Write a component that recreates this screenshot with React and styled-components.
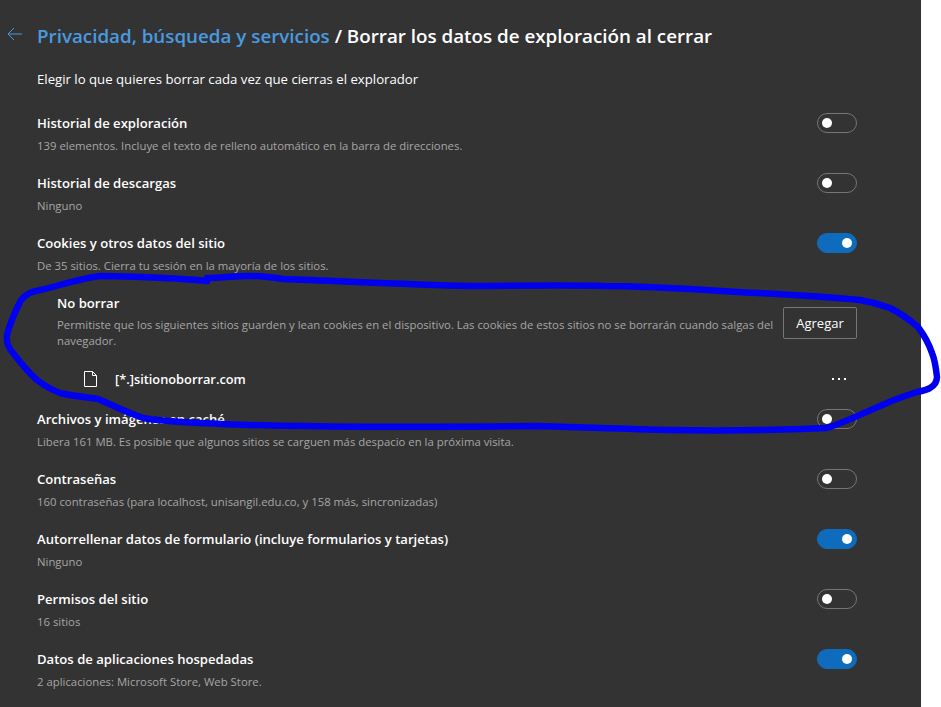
import React from 'react'
import styled, { createGlobalStyle } from 'styled-components'

const Global = createGlobalStyle`
  html, body { margin: 0; padding: 0; background: #fff; }
  body { font-family: "Open Sans", "Noto Sans", sans-serif; }
`

const Page = styled.div`
  position: relative;
  width: 941px;
  height: 707px;
  overflow: hidden;
`

const Panel = styled.main`
  width: 921px;
  height: 707px;
  box-sizing: border-box;
  padding: 0 64px 0 37px;
  background: #333333;
  color: #fff;
`

const Header = styled.header`
  display: flex;
  align-items: center;
  height: 36px;
  padding-top: 18px;
  margin-left: -30px;
`

const BackIcon = styled.svg`
  width: 15px;
  height: 14px;
  margin-right: 15px;
  margin-bottom: 4px;
  color: #4a9ae0;
`

const Heading = styled.h1`
  margin: 0;
  font-size: 18.8px;
  line-height: 36px;
  font-weight: 600;
  white-space: nowrap;
`

const Crumb = styled.span`
  color: #4a9ae0;
`

const Intro = styled.p`
  margin: 15px 0 14px;
  font-size: 13.2px;
  line-height: 20px;
  color: #fff;
`

const Row = styled.section`
  display: flex;
  justify-content: space-between;
  align-items: flex-start;
  height: 60px;
  box-sizing: border-box;
  padding-top: 10px;
`

const Title = styled.div`
  font-size: 13.1px;
  line-height: 20px;
  font-weight: 600;
  color: #fff;
`

const Desc = styled.div`
  margin-top: 4px;
  padding-top: 1px;
  font-size: 11.35px;
  line-height: 16px;
  color: #a6a6a6;
`

const Toggle = styled.span`
  display: flex;
  align-items: center;
  justify-content: ${p => (p.$on ? 'flex-end' : 'flex-start')};
  width: 40px;
  height: 20px;
  box-sizing: border-box;
  padding: 0 4px;
  border-radius: 10px;
  border: 1px solid ${p => (p.$on ? '#0f6cbd' : '#767676')};
  background: ${p => (p.$on ? '#0f6cbd' : 'transparent')};
  flex-shrink: 0;

  &::after {
    content: '';
    width: 10px;
    height: 10px;
    border-radius: 50%;
    background: #fff;
  }
`

const Nested = styled.section`
  height: 116px;
  padding: 10px 0 0 20px;
  box-sizing: border-box;
`

const NestedBody = styled.div`
  display: flex;
  justify-content: space-between;
  align-items: flex-start;
  gap: 8px;
  margin-top: 3px;
`

const NestedDesc = styled(Desc)`
  margin-top: 0;
  width: 722px;
`

const AddButton = styled.button`
  width: 74px;
  height: 32px;
  margin-top: -9px;
  flex-shrink: 0;
  border: 1px solid #767676;
  border-radius: 2px;
  background: transparent;
  color: #fff;
  font: 400 13px "Open Sans", sans-serif;
`

const SiteRow = styled.div`
  display: flex;
  align-items: center;
  height: 40px;
  margin-top: 10px;
  padding-left: 27px;
`

const FileIcon = styled.svg`
  width: 13px;
  height: 16px;
  margin-right: 18px;
`

const SiteName = styled.span`
  flex: 1;
  font-size: 12.8px;
  font-weight: 600;
`

const More = styled.span`
  display: flex;
  gap: 4px;
  margin-right: 11px;

  i {
    width: 2px;
    height: 2px;
    background: #fff;
  }
`

const Scribble = styled.svg`
  position: absolute;
  inset: 0;
  width: 941px;
  height: 707px;
  pointer-events: none;
`

const items = [
  ['Historial de exploración', '139 elementos. Incluye el texto de relleno automático en la barra de direcciones.', false],
  ['Historial de descargas', 'Ninguno', false],
  ['Cookies y otros datos del sitio', 'De 35 sitios. Cierra tu sesión en la mayoría de los sitios.', true],
]

const moreItems = [
  ['Archivos y imágenes en caché', 'Libera 161 MB. Es posible que algunos sitios se carguen más despacio en la próxima visita.', false],
  ['Contraseñas', '160 contraseñas (para localhost, unisangil.edu.co, y 158 más, sincronizadas)', false],
  ['Autorrellenar datos de formulario (incluye formularios y tarjetas)', 'Ninguno', true],
  ['Permisos del sitio', '16 sitios', false],
  ['Datos de aplicaciones hospedadas', '2 aplicaciones: Microsoft Store, Web Store.', true],
]

const Setting = ({ title, desc, on }) => (
  <Row>
    <div>
      <Title>{title}</Title>
      <Desc>{desc}</Desc>
    </div>
    <Toggle $on={on} />
  </Row>
)

export default function App() {
  return (
    <Page>
      <Global />
      <Panel>
        <Header>
          <BackIcon viewBox="0 0 15 14" fill="none" stroke="currentColor" strokeWidth="1">
            <path d="M15 7H1M7 1 1 7l6 6" />
          </BackIcon>
          <Heading>
            <Crumb>Privacidad, búsqueda y servicios</Crumb> / Borrar los datos de exploración al cerrar
          </Heading>
        </Header>
        <Intro>Elegir lo que quieres borrar cada vez que cierras el explorador</Intro>
        {items.map(([t, d, on]) => <Setting key={t} title={t} desc={d} on={on} />)}
        <Nested>
          <Title>No borrar</Title>
          <NestedBody>
            <NestedDesc>
              Permitiste que los siguientes sitios guarden y lean cookies en el dispositivo. Las cookies de estos sitios no se borrarán cuando salgas del navegador.
            </NestedDesc>
            <AddButton>Agregar</AddButton>
          </NestedBody>
          <SiteRow>
            <FileIcon viewBox="0 0 13 16" fill="none" stroke="#fff" strokeWidth="1">
              <path d="M.5.5h8l4 4v11H.5zM8.5.5v4h4" />
            </FileIcon>
            <SiteName>[*.]sitionoborrar.com</SiteName>
            <More><i /><i /><i /></More>
          </SiteRow>
        </Nested>
        {moreItems.map(([t, d, on]) => <Setting key={t} title={t} desc={d} on={on} />)}
      </Panel>
      <Scribble viewBox="0 0 941 707" fill="none" stroke="#0000ee" strokeWidth="6.5" strokeLinecap="round" strokeLinejoin="round">
        <path d="M207 281C190 279 130 276 100 276C85 278 75 281 63 284C50 288 40 290 32 292C25 295 22 298 20 302C15 312 10 322 7 335C6 342 9 349 13 353C20 362 28 372 37 380C45 386 52 390 60 393C72 396 85 397 98 399C112 405 128 413 143 418C160 421 180 422 200 423C300 428 420 427 537 426C580 427 620 429 670 430C720 431 780 430 827 428C848 421 868 411 887 403C898 398 908 395 917 392C922 391 927 390 930 388C935 385 937 381 937 377C936 368 935 360 932 353C929 344 924 335 918 327C910 320 900 313 890 308C882 305 872 302 860 300C820 296 780 294 737 292C690 289 650 286 603 286C560 285 510 286 470 286C400 284 340 281 283 279C270 277 260 276 250 276C235 276 220 278 207 278" />
      </Scribble>
    </Page>
  )
}
